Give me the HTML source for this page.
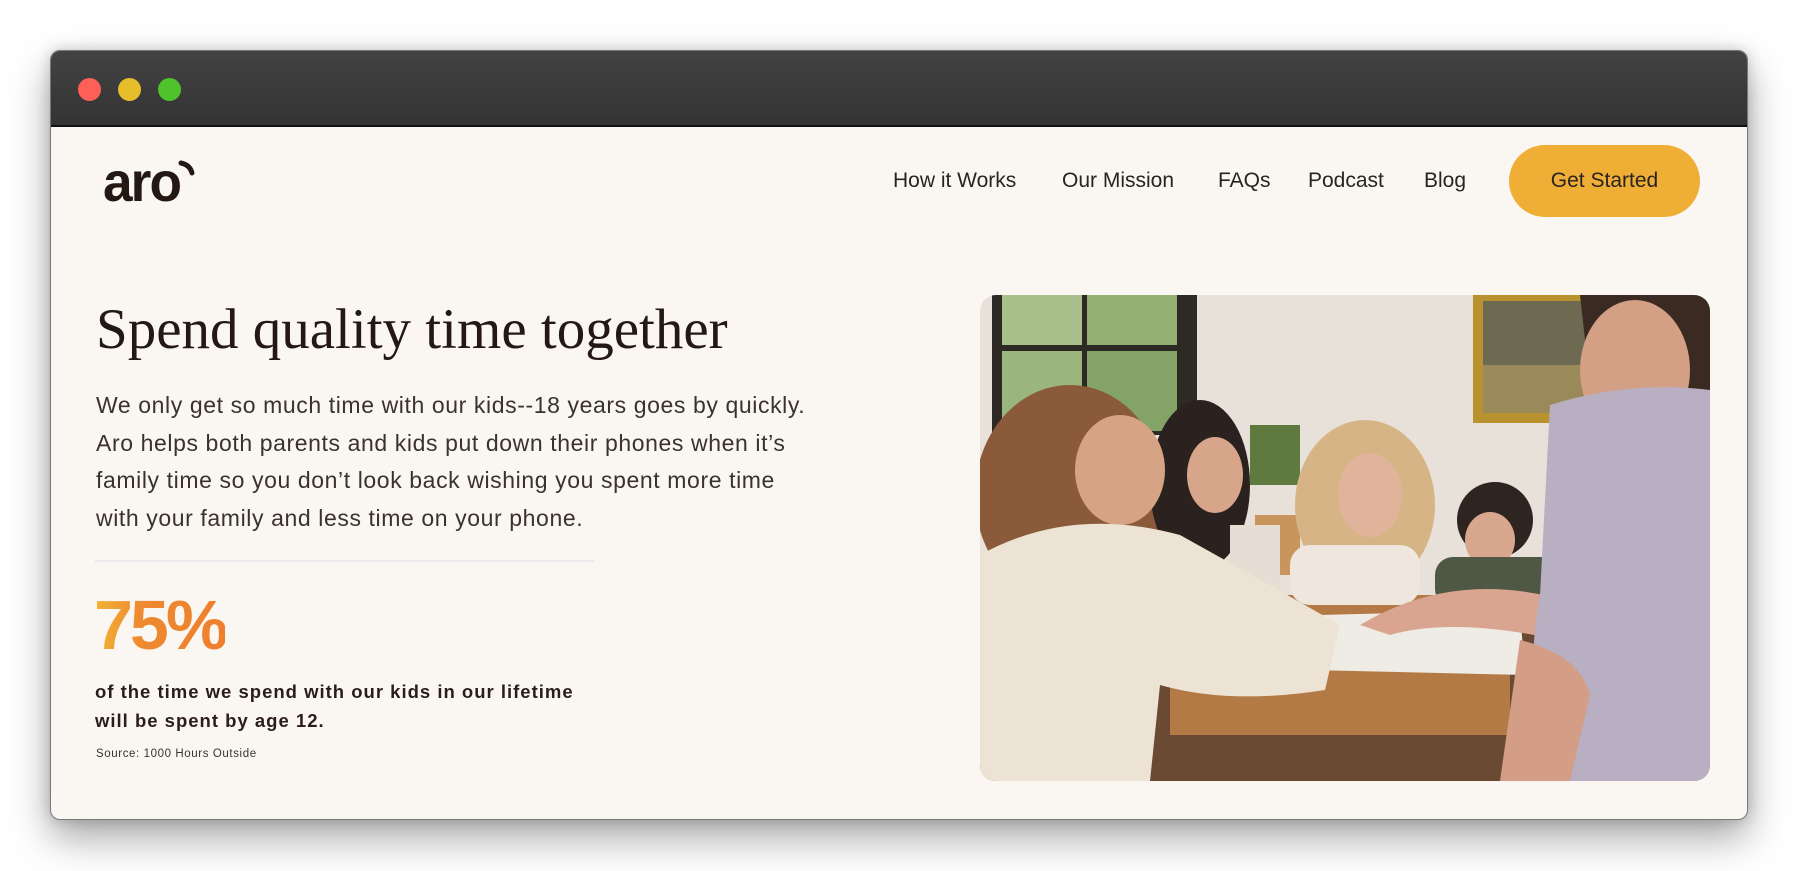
<!DOCTYPE html>
<html><head><meta charset="utf-8"><style>
*{margin:0;padding:0;box-sizing:border-box}
html,body{width:1799px;height:871px;overflow:hidden;background:#fff;font-family:"Liberation Sans",sans-serif}
.win{position:absolute;left:50px;top:50px;width:1698px;height:770px;border-radius:10px;background:#faf7f2;overflow:hidden;box-shadow:0 18px 40px rgba(0,0,0,.35),0 0 14px rgba(0,0,0,.18);border:1px solid #777}
.bar{position:absolute;left:0;top:0;width:100%;height:76px;background:linear-gradient(#434343,#333);border-bottom:2px solid #111}
.dot{position:absolute;top:27px;width:23px;height:23px;border-radius:50%}
.a{position:absolute;white-space:nowrap}
.nav{font-size:21px;color:#2a2420;top:118px;line-height:24px}
</style></head><body>
<div class="win">
<div class="bar">
<div class="dot" style="left:27px;background:#fe5f57"></div>
<div class="dot" style="left:67px;background:#e6bd2a"></div>
<div class="dot" style="left:107px;background:#4fc32c"></div>
</div>
<!-- logo -->
<div class="a" style="left:52px;top:103px;font-size:56px;line-height:56px;color:#231812;letter-spacing:-2px;font-weight:bold;transform:scaleX(.95);transform-origin:left">aro</div>
<svg class="a" style="left:124px;top:108px" width="22" height="22" viewBox="0 0 22 22"><path d="M6 4 Q15 6 17 14" stroke="#231812" stroke-width="5" fill="none" stroke-linecap="round"/></svg>
<!-- nav -->
<div class="a nav" style="left:842px">How it Works</div>
<div class="a nav" style="left:1011px">Our Mission</div>
<div class="a nav" style="left:1167px">FAQs</div>
<div class="a nav" style="left:1257px">Podcast</div>
<div class="a nav" style="left:1373px">Blog</div>
<div class="a" style="left:1458px;top:94px;width:191px;height:72px;border-radius:36px;background:#efae36;color:#2a2420;font-size:21px;line-height:72px;text-align:center">Get Started</div>
<!-- hero text -->
<div class="a" style="left:45px;top:248px;font-family:'Liberation Serif',serif;font-size:57px;line-height:62px;color:#231812">Spend quality time together</div>
<div class="a" style="left:45px;top:336px;font-size:23px;line-height:37.5px;letter-spacing:0.6px;color:#3a322c">We only get so much time with our kids--18 years goes by quickly.<br>Aro helps both parents and kids put down their phones when it’s<br>family time so you don’t look back wishing you spent more time<br>with your family and less time on your phone.</div>
<div class="a" style="left:44px;top:509px;width:500px;height:2px;background:#eee8ec"></div>
<div class="a" style="left:43px;top:539px;font-size:70px;line-height:70px;letter-spacing:-3px;font-weight:bold;background:linear-gradient(90deg,#f2b335,#ee8a30 35%,#ef7f2e);-webkit-background-clip:text;background-clip:text;color:transparent">75%</div>
<div class="a" style="left:44px;top:626px;font-size:18.5px;line-height:29px;letter-spacing:1px;font-weight:bold;color:#2a1e18">of the time we spend with our kids in our lifetime<br>will be spent by age 12.</div>
<div class="a" style="left:45px;top:696px;font-size:11.5px;line-height:14px;letter-spacing:0.6px;color:#3a322c">Source: 1000 Hours Outside</div>
<!-- photo -->
<svg class="a" style="left:929px;top:244px;border-radius:16px" width="730" height="486" viewBox="0 0 730 486">
<rect width="730" height="486" fill="#e8e1d9"/>
<rect x="12" y="0" width="205" height="140" fill="#2d2a26"/>
<rect x="22" y="0" width="80" height="50" fill="#a9bf8c"/><rect x="107" y="0" width="90" height="50" fill="#93b072"/>
<rect x="22" y="56" width="80" height="80" fill="#9ab67e"/><rect x="107" y="56" width="90" height="80" fill="#84a366"/>
<rect x="493" y="0" width="125" height="128" fill="#b8922f"/><rect x="503" y="6" width="105" height="112" fill="#6e6a52"/>
<rect x="503" y="70" width="105" height="48" fill="#9a8a5a"/>
<rect x="270" y="130" width="50" height="60" fill="#5e7a3e"/>
<rect x="275" y="220" width="45" height="60" fill="#c8955c"/>
<rect x="0" y="300" width="730" height="186" fill="#6a4a33"/>
<rect x="190" y="300" width="340" height="140" fill="#b47a45"/>
<path d="M340 320 L540 315 L545 380 L330 375 Z" fill="#efece6"/>
<ellipse cx="90" cy="200" rx="95" ry="110" fill="#8a5a3a"/>
<ellipse cx="220" cy="190" rx="50" ry="85" fill="#2b2220"/>
<ellipse cx="235" cy="180" rx="28" ry="38" fill="#d7a58a"/>
<rect x="250" y="230" width="50" height="70" fill="#e6ddd4"/>
<ellipse cx="385" cy="210" rx="70" ry="85" fill="#d7b486"/>
<ellipse cx="390" cy="200" rx="32" ry="42" fill="#e0b49a"/>
<rect x="310" y="250" width="130" height="60" rx="20" fill="#efe6dd"/>
<ellipse cx="515" cy="225" rx="38" ry="38" fill="#2e2420"/>
<ellipse cx="510" cy="245" rx="25" ry="28" fill="#d9a78e"/>
<rect x="455" y="262" width="130" height="50" rx="18" fill="#4f5845"/>
<ellipse cx="140" cy="175" rx="45" ry="55" fill="#d6a485"/>
<path d="M0 260 Q90 210 200 240 Q290 290 360 330 L345 395 Q250 410 180 390 L170 486 L0 486 Z" fill="#ede3d4"/>
<path d="M380 330 Q480 270 600 310 L600 350 Q480 320 410 340 Z" fill="#d9a590"/>
<path d="M600 0 L730 0 L730 140 L640 150 L610 90 Z" fill="#3a2a22"/>
<ellipse cx="655" cy="75" rx="55" ry="70" fill="#d3a086"/>
<path d="M570 110 Q650 85 730 95 L730 486 L560 486 Q545 380 560 300 Z" fill="#b9afc2"/>
<path d="M540 345 Q600 360 610 400 L590 486 L520 486 Z" fill="#d39d86"/>
</svg>
</div>
</body></html>
